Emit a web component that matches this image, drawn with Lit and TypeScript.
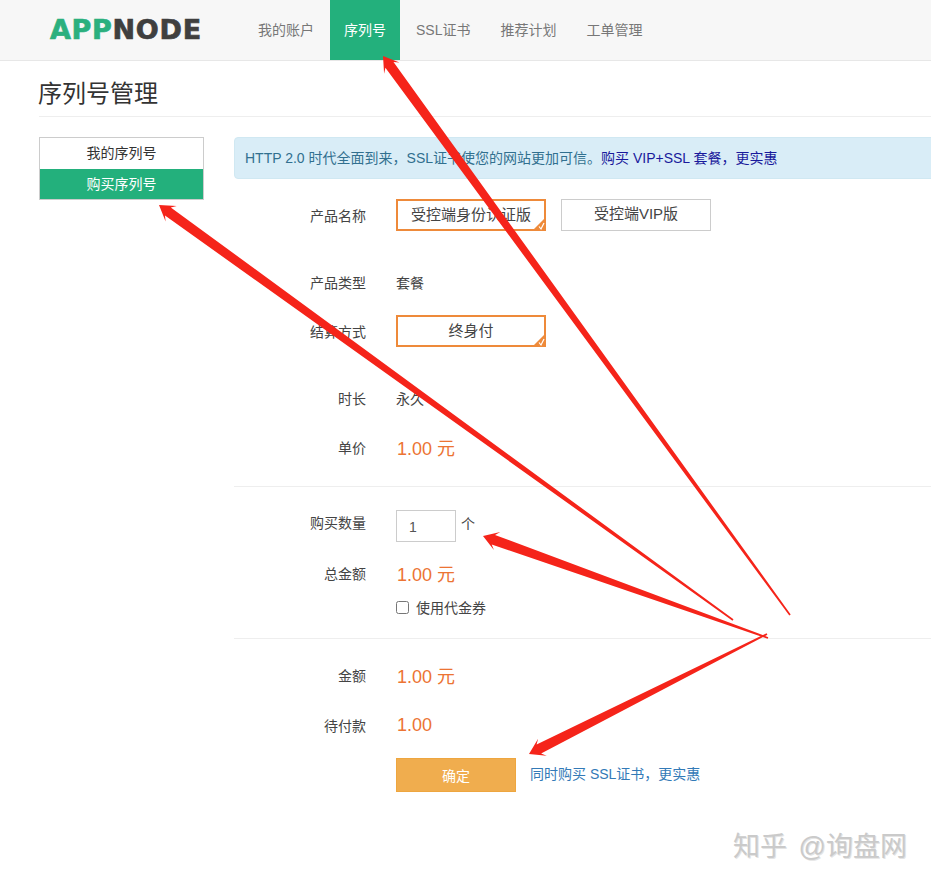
import { LitElement, html, css, svg } from "lit";
import { customElement } from "lit/decorators.js";

type Pt = [number, number];
const ARROWS: { tip: Pt; tail: Pt }[] = [
  { tip: [383, 56], tail: [790, 615] },
  { tip: [159, 205], tail: [733, 620] },
  { tip: [483, 536], tail: [768, 638] },
  { tip: [529, 754], tail: [767, 634] },
];

function arrowPoints({ tip, tail }: { tip: Pt; tail: Pt }): string {
  const dx = tail[0] - tip[0];
  const dy = tail[1] - tip[1];
  const len = Math.hypot(dx, dy);
  const ux = dx / len;
  const uy = dy / len;
  const at = (along: number, perp: number) =>
    `${(tip[0] + ux * along - uy * perp).toFixed(1)},${(tip[1] + uy * along + ux * perp).toFixed(1)}`;
  return [
    at(0, 0),
    at(15, 9.5),
    at(11, 5),
    at(len, 0.9),
    at(len, -0.9),
    at(11, -5),
    at(15, -9.5),
  ].join(" ");
}

@customElement("app-root")
export class AppRoot extends LitElement {
  static styles = css`
    :host {
      display: block;
      position: relative;
      width: 931px;
      height: 885px;
      overflow: hidden;
      background: #fff;
      color: #444;
      font-family: "Liberation Sans", "Noto Sans CJK SC", sans-serif;
      font-size: 14px;
    }
    * { box-sizing: border-box; }
    a { text-decoration: none; }

    .topbar {
      display: flex;
      height: 61px;
      background: #f7f7f7;
      border-bottom: 1px solid #e7e7e7;
      padding-left: 50px;
    }
    .logo {
      width: 194px;
      font-family: "DejaVu Sans", sans-serif;
      font-weight: 700;
      font-size: 27px;
      letter-spacing: 0.7px;
      line-height: 60px;
      color: #3f3f3f;
      white-space: nowrap;
      -webkit-text-stroke: 0.7px currentColor;
    }
    .logo span { color: #2bb07e; }
    .nav { display: flex; gap: 2px; height: 60px; }
    .nav a {
      padding: 0 14px;
      line-height: 60px;
      color: #777;
    }
    .nav a.on { background: #23b07c; color: #fff; }

    .page { padding: 0 0 0 39px; }
    h1 {
      margin: 0;
      height: 56px;
      line-height: 66px;
      font-size: 24px;
      font-weight: 400;
      color: #333;
      text-indent: -1px;
      border-bottom: 1px solid #eee;
    }
    .cols { display: flex; gap: 30px; padding-top: 20px; }

    .side {
      flex: none;
      width: 165px;
      height: 63px;
      border: 1px solid #ccc;
      text-align: center;
    }
    .side a {
      display: block;
      height: 30.5px;
      line-height: 30px;
      color: #333;
    }
    .side a.on { background: #23b07c; color: #fff; }

    .main { flex: none; width: 720px; }
    .alert {
      height: 42px;
      line-height: 41px;
      padding-left: 10px;
      background: #d9edf7;
      border: 1px solid #d0e8f2;
      border-radius: 4px;
      color: #31708f;
      white-space: nowrap;
    }
    .alert a { color: #1a1a9c; }

    .row { display: flex; align-items: center; min-height: 32px; }
    .label { flex: none; width: 132px; text-align: right; margin-right: 30px; color: #444; }
    .label.high { margin-top: -8px; }
    .m8 { margin-top: 8px; }
    .m15 { margin-top: 15px; }
    .m16 { margin-top: 16px; }
    .m17 { margin-top: 17px; }
    .m18 { margin-top: 18px; }
    .m20 { margin-top: 20px; }
    .m21 { margin-top: 21px; }
    .m23 { margin-top: 23px; }
    .m35 { margin-top: 35px; }

    .choices { display: flex; gap: 15px; }
    .choice {
      position: relative;
      width: 150px;
      height: 32px;
      line-height: 28px;
      text-align: center;
      font-size: 15px;
      border: 1px solid #ccc;
      color: #444;
      background: #fff;
    }
    .choice.on { border: 2px solid #ee8a3a; }
    .corner { position: absolute; right: -2px; bottom: -2px; width: 14px; height: 14px; display: block; }

    .price { font-size: 18px; color: #ec7433; margin-left: 1px; }
    hr { margin: 0; border: 0; border-top: 1px solid #eee; }

    .qty {
      width: 60px;
      height: 32px;
      padding: 2px 0 0 12px;
      border: 1px solid #ccc;
      font: inherit;
      color: #555;
      background: #fff;
      outline: none;
    }
    .unit { margin: -6px 0 0 5px; }
    .check { min-height: 20px; }
    .check input { width: 13px; height: 13px; margin: 0 7px 0 0; }
    .submit {
      width: 120px;
      height: 34px;
      border: 1px solid #eea63f;
      background: #f0ad4e;
      color: #fff;
      font: inherit;
      padding: 0;
    }
    .more { margin: -4px 0 0 14px; color: #337ab7; }
    .actions { min-height: 34px; }
    .spacer { flex: none; width: 162px; }

    .arrows { position: absolute; inset: 0; width: 931px; height: 885px; pointer-events: none; }
    .arrows polygon { fill: #f5241a; }
    .mark {
      position: absolute;
      left: 733px;
      top: 828px;
      font-size: 27px;
      line-height: 38px;
      word-spacing: 4px;
      color: #cacaca;
      white-space: nowrap;
      text-shadow: 1px 1px 0 #e4e4e4;
    }
  `;

  private corner() {
    return html`<svg class="corner" viewBox="0 0 14 14">
      <path d="M14 0V14H0Z" fill="#ee8a3a"></path>
      <path d="M7 9.5l2 2.5 3-6" fill="none" stroke="#fff" stroke-width="1.2"></path>
    </svg>`;
  }

  render() {
    return html`
      <header class="topbar">
        <div class="logo"><span>APP</span>NODE</div>
        <nav class="nav">
          <a href="#">我的账户</a>
          <a href="#" class="on">序列号</a>
          <a href="#">SSL证书</a>
          <a href="#">推荐计划</a>
          <a href="#">工单管理</a>
        </nav>
      </header>
      <div class="page">
        <h1>序列号管理</h1>
        <div class="cols">
          <aside class="side">
            <a href="#">我的序列号</a>
            <a href="#" class="on">购买序列号</a>
          </aside>
          <section class="main">
            <div class="alert">HTTP 2.0 时代全面到来，SSL证书使您的网站更加可信。<a href="#">购买 VIP+SSL 套餐，更实惠</a></div>
            <div class="row m20">
              <div class="label">产品名称</div>
              <div class="choices">
                <div class="choice on">受控端身份认证版${this.corner()}</div>
                <div class="choice">受控端VIP版</div>
              </div>
            </div>
            <div class="row m35"><div class="label">产品类型</div><div>套餐</div></div>
            <div class="row m17">
              <div class="label">结算方式</div>
              <div class="choice on">终身付${this.corner()}</div>
            </div>
            <div class="row m35"><div class="label">时长</div><div>永久</div></div>
            <div class="row m17"><div class="label">单价</div><div class="price">1.00 元</div></div>
            <hr class="m23" />
            <div class="row m23">
              <div class="label high">购买数量</div>
              <input class="qty" value="1" />
              <span class="unit">个</span>
            </div>
            <div class="row m15"><div class="label">总金额</div><div class="price">1.00 元</div></div>
            <label class="row check m8"><div class="spacer"></div><input type="checkbox" />使用代金券</label>
            <hr class="m21" />
            <div class="row m20"><div class="label">金额</div><div class="price">1.00 元</div></div>
            <div class="row m18"><div class="label">待付款</div><div class="price">1.00</div></div>
            <div class="row actions m17">
              <div class="spacer"></div>
              <button class="submit">确定</button>
              <a href="#" class="more">同时购买 SSL证书，更实惠</a>
            </div>
          </section>
        </div>
      </div>
      <svg class="arrows" viewBox="0 0 931 885">
        ${ARROWS.map((a) => svg`<polygon points=${arrowPoints(a)}></polygon>`)}
      </svg>
      <div class="mark">知乎 @询盘网</div>
    `;
  }
}
